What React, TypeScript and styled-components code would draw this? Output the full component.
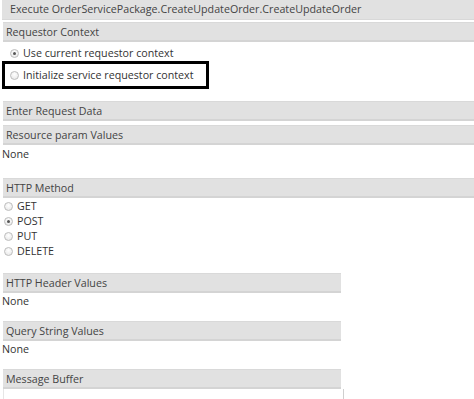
import React from "react";
import styled, { createGlobalStyle } from "styled-components";

const Global = createGlobalStyle`
  html, body { margin: 0; padding: 0; background: #fff; }
  body {
    font-family: "Open Sans", "Noto Sans", sans-serif;
    font-size: 10.7px;
    line-height: 16px;
    color: #3a3a3a;
    width: 474px;
    height: 399px;
    overflow: hidden;
  }
`;

const Page = styled.div`
  display: flex;
  flex-direction: column;
`;

const Bar = styled.div<{ $w?: number; $mt?: number }>`
  box-sizing: border-box;
  margin-left: 3px;
  margin-top: ${(p) => p.$mt ?? 0}px;
  width: ${(p) => (p.$w ? `${p.$w}px` : "auto")};
  height: 20px;
  line-height: 18px;
  padding-left: 3px;
  background: #e1e1e1;
  border-top: 1px solid #d9d9d9;
  border-bottom: 2px solid #d4d4d4;
  color: #444;
  white-space: nowrap;
  flex: none;
`;

const Title = styled(Bar)`
  margin-left: 2px;
  padding-left: 8px;
  line-height: 19px;
  border-top: none;
  border-bottom: 1px solid #d8d8d8;
`;

const RadioList = styled.div<{ $mt?: number; $indent: number }>`
  display: flex;
  flex-direction: column;
  margin-top: ${(p) => p.$mt ?? 0}px;
  padding-left: ${(p) => p.$indent}px;
  flex: none;
`;

const RadioRow = styled.label<{ $h?: number }>`
  display: flex;
  align-items: center;
  gap: 4px;
  height: ${(p) => p.$h ?? 15}px;
  line-height: ${(p) => p.$h ?? 15}px;
  color: #333;
  white-space: nowrap;
`;

const Circle = styled.span<{ $on?: boolean }>`
  position: relative;
  box-sizing: border-box;
  width: 9px;
  height: 9px;
  border-radius: 50%;
  border: 1px solid #bdbdbd;
  background: radial-gradient(circle at 50% 35%, #ffffff 0%, #e4e4e4 100%);
  flex: none;
  &::after {
    content: "";
    display: ${(p) => (p.$on ? "block" : "none")};
    position: absolute;
    left: 2px;
    top: 2px;
    width: 3px;
    height: 3px;
    border-radius: 50%;
    background: #555;
  }
`;

const Highlight = styled.div`
  box-sizing: border-box;
  margin-left: 2px;
  width: 207px;
  height: 28px;
  border: 3px solid #000;
  padding-left: 5px;
  display: flex;
  align-items: center;
  flex: none;
`;

const Plain = styled.div<{ $mt?: number }>`
  margin-top: ${(p) => p.$mt ?? 0}px;
  margin-left: 2px;
  height: 16px;
  line-height: 16px;
  color: #333;
  flex: none;
`;

const TextArea = styled.div`
  margin-left: 3px;
  width: 339px;
  height: 20px;
  border-right: 1px solid #cfcfcf;
  border-left: 1px solid #e6e6e6;
  flex: none;
`;

function Radio({ label, on, h }: { label: string; on?: boolean; h?: number }) {
  return (
    <RadioRow $h={h}>
      <Circle $on={on} />
      <span>{label}</span>
    </RadioRow>
  );
}

export default function App() {
  return (
    <>
      <Global />
      <Page>
        <Title>Execute OrderServicePackage.CreateUpdateOrder.CreateUpdateOrder</Title>
        <Bar $mt={2}>Requestor Context</Bar>
        <RadioList $mt={3} $indent={10}>
          <Radio label="Use current requestor context" on h={16} />
        </RadioList>
        <Highlight>
          <Radio label="Initialize service requestor context" h={20} />
        </Highlight>
        <Bar $mt={12}>Enter Request Data</Bar>
        <Bar $mt={4}>Resource param Values</Bar>
        <Plain $mt={1}>None</Plain>
        <Bar $mt={16}>HTTP Method</Bar>
        <RadioList $mt={1} $indent={4}>
          <Radio label="GET" h={15} />
          <Radio label="POST" on h={15} />
          <Radio label="PUT" h={15} />
          <Radio label="DELETE" h={15} />
        </RadioList>
        <Bar $w={338} $mt={14}>HTTP Header Values</Bar>
        <Plain>None</Plain>
        <Bar $w={338} $mt={12}>Query String Values</Bar>
        <Plain>None</Plain>
        <Bar $w={338} $mt={12}>Message Buffer</Bar>
        <TextArea />
      </Page>
    </>
  );
}
